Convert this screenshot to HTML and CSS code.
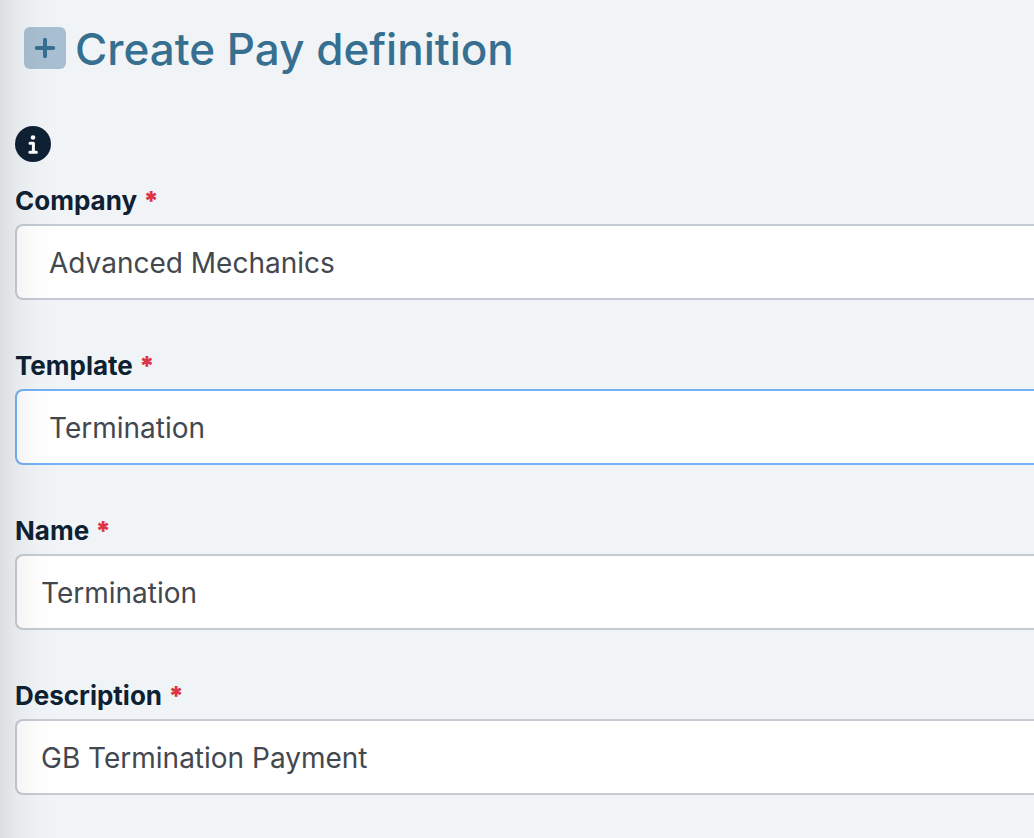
FILE: index.html
```html
<!DOCTYPE html>
<html lang="en">
<head>
    <meta charset="UTF-8">
    <meta name="viewport" content="width=device-width, initial-scale=1.0">
    <title>Create Pay definition</title>
    <link rel="stylesheet" href="styles.css">
</head>
<body>
    <main class="page">
        <div class="header">
            <svg class="plus-icon" viewBox="0 0 42 42" aria-hidden="true">
                <rect width="42" height="42" rx="6" fill="#a7bfd0"/>
                <path d="M21 12.8v16.4M12.8 21h16.4" stroke="#366f90" stroke-width="4" stroke-linecap="round"/>
            </svg>
            <h1 class="title">Create Pay definition</h1>
        </div>

        <button type="button" class="info" aria-label="Information">
            <svg viewBox="0 0 36 36" aria-hidden="true">
                <circle cx="18" cy="18" r="18" fill="#0e2133"/>
                <circle cx="18" cy="11.5" r="2.3" fill="#fff"/>
                <path d="M15 17.2h3.4v9M14.8 26.3h6.6" fill="none" stroke="#fff" stroke-width="3" stroke-linecap="round" stroke-linejoin="round"/>
            </svg>
        </button>

        <form class="form">
            <div class="field">
                <label for="company">Company <span class="required">*</span></label>
                <select id="company" class="control select">
                    <option>Advanced Mechanics</option>
                </select>
            </div>

            <div class="field">
                <label for="template">Template <span class="required">*</span></label>
                <select id="template" class="control select active">
                    <option>Termination</option>
                </select>
            </div>

            <div class="field">
                <label for="name">Name <span class="required">*</span></label>
                <input type="text" id="name" class="control" value="Termination">
            </div>

            <div class="field">
                <label for="description">Description <span class="required">*</span></label>
                <input type="text" id="description" class="control" value="GB Termination Payment">
            </div>
        </form>
    </main>
</body>
</html>
```
FILE: styles.css
```css
* {
    margin: 0;
    padding: 0;
    box-sizing: border-box;
    font-family: Inter, "Liberation Sans", sans-serif;
}

body {
    background-color: #f0f4f7;
    color: #0e2133;
}

.page {
    position: relative;
    min-height: 100vh;
    padding: 20px 0 40px 15px;
}

/* shadow cast by the side panel */
.page::before {
    content: "";
    position: absolute;
    top: 0;
    bottom: 0;
    left: 0;
    width: 56px;
    background: linear-gradient(to right, rgba(0, 0, 0, 0.09), rgba(0, 0, 0, 0.04) 30%, rgba(0, 0, 0, 0.01) 65%, rgba(0, 0, 0, 0));
    pointer-events: none;
    z-index: 1;
}

.header {
    display: flex;
    align-items: center;
    gap: 9px;
    padding-left: 9px;
}

.plus-icon {
    width: 42px;
    height: 42px;
}

.title {
    padding-top: 2px;
    font-size: 44px;
    font-weight: 500;
    line-height: 54px;
    color: #366f90;
}

.info {
    display: block;
    width: 36px;
    height: 36px;
    margin: 50px 0 20px;
    border: none;
    background: none;
    cursor: pointer;
}

.info svg {
    display: block;
}

.form {
    display: flex;
    flex-direction: column;
    gap: 47px;
}

.field label {
    display: block;
    margin-bottom: 4px;
    font-size: 26px;
    font-weight: 700;
    line-height: 38px;
}

.required {
    color: #dc3545;
    font-weight: 900;
}

.control {
    display: block;
    width: 100%;
    height: 76px;
    padding: 2px 24px 0;
    border: 2px solid #c5cad3;
    border-right: none;
    border-radius: 8px 0 0 8px;
    background-color: #fff;
    color: #43484f;
    font-size: 28px;
    outline: none;
}

.select {
    appearance: none;
    padding-left: 32px;
}

.control.active,
.control:focus {
    border-color: #74b0f4;
}
```
